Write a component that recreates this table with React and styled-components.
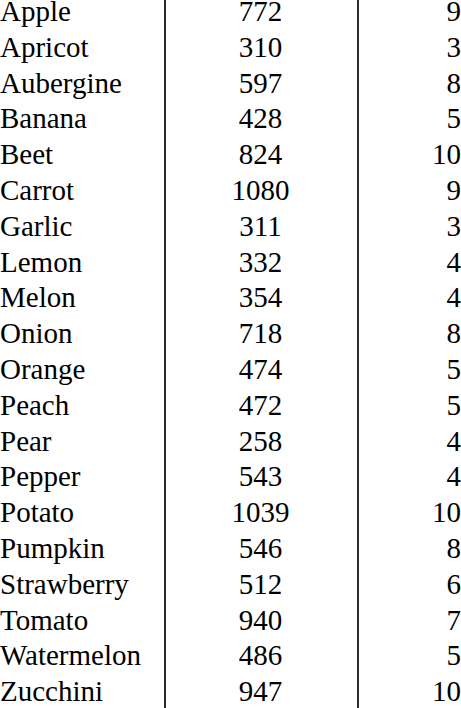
import React from "react";
import styled, { createGlobalStyle } from "styled-components";

const Global = createGlobalStyle`
  html, body { margin: 0; padding: 0; background: #fff; overflow: hidden; }
  body { width: 461px; height: 708px; font-family: "Liberation Serif", serif; }
`;

const Table = styled.div`
  display: grid;
  grid-template-columns: 164px 193px 104px;
  margin-top: -6px;
  font-family: "Liberation Serif", serif;
  font-size: 29px;
  line-height: 35.8px;
  color: #000;
`;

const Cell = styled.div`
  white-space: nowrap;
  text-align: ${(p) => p.$align || "left"};
  border-left: ${(p) => (p.$rule ? "2px solid #2a2a2a" : "none")};
  padding-right: ${(p) => (p.$align === "center" ? "2px" : "0")};
`;

const rows = [
  ["Apple", 772, 9],
  ["Apricot", 310, 3],
  ["Aubergine", 597, 8],
  ["Banana", 428, 5],
  ["Beet", 824, 10],
  ["Carrot", 1080, 9],
  ["Garlic", 311, 3],
  ["Lemon", 332, 4],
  ["Melon", 354, 4],
  ["Onion", 718, 8],
  ["Orange", 474, 5],
  ["Peach", 472, 5],
  ["Pear", 258, 4],
  ["Pepper", 543, 4],
  ["Potato", 1039, 10],
  ["Pumpkin", 546, 8],
  ["Strawberry", 512, 6],
  ["Tomato", 940, 7],
  ["Watermelon", 486, 5],
  ["Zucchini", 947, 10],
];

export default function App() {
  return (
    <>
      <Global />
      <Table>
        {rows.map(([name, a, b]) => (
          <React.Fragment key={name}>
            <Cell>{name}</Cell>
            <Cell $rule $align="center">{a}</Cell>
            <Cell $rule $align="right">{b}</Cell>
          </React.Fragment>
        ))}
      </Table>
    </>
  );
}
